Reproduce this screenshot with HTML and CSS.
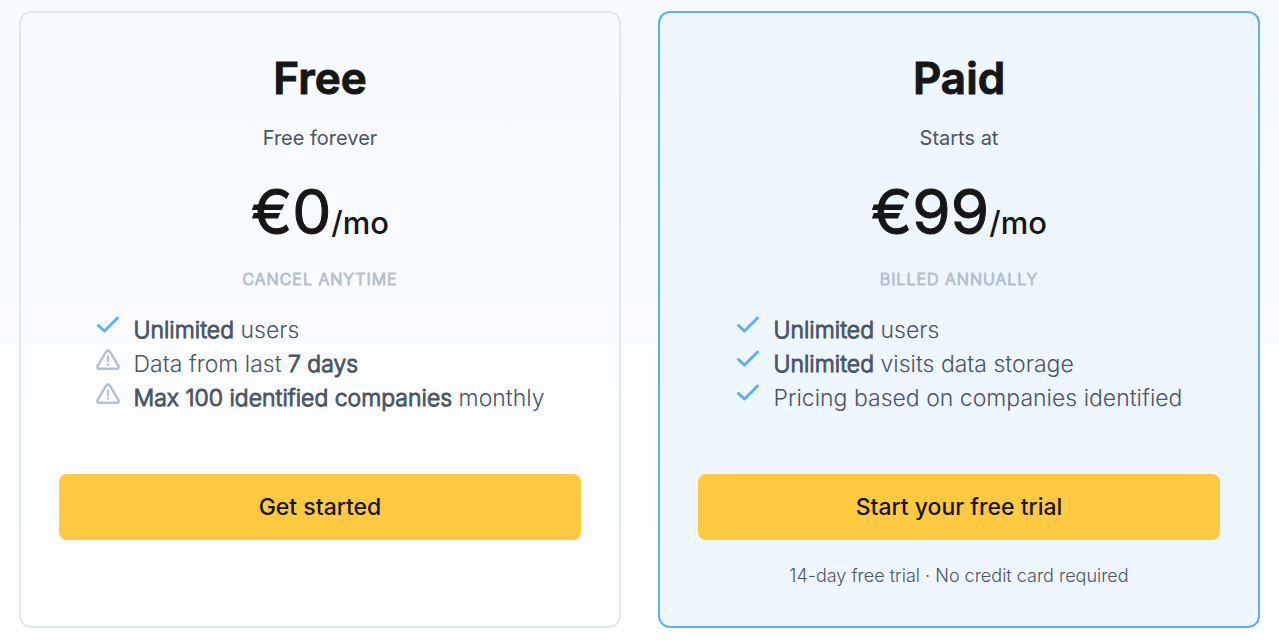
FILE: index.html
```html
<!DOCTYPE html>
<html lang="en">
<head>
  <meta charset="UTF-8">
  <title>Pricing</title>
  <meta name="viewport" content="width=device-width, initial-scale=1.0">
  <link rel="stylesheet" href="styles.css">
</head>
<body>

  <!-- Shared icons -->
  <svg class="icon-defs" aria-hidden="true">
    <symbol id="icon-check" viewBox="0 0 24 24">
      <path d="M2.5 11.5 L8.5 17 L21.5 4" fill="none" stroke="currentColor" stroke-width="3" stroke-linecap="round" stroke-linejoin="round"/>
    </symbol>
    <symbol id="icon-warning" viewBox="0 0 24 24">
      <path d="M10.3 3.4 L1.6 17.8 Q0.6 20.6 3.2 20.8 L20.8 20.8 Q23.4 20.6 22.4 17.8 L13.7 3.4 Q12 1.5 10.3 3.4 Z" fill="none" stroke="currentColor" stroke-width="2.4" stroke-linejoin="round"/>
      <path d="M12 7.5 V14 M12 15.6 V17.8" fill="none" stroke="currentColor" stroke-width="2.2"/>
    </symbol>
  </svg>

  <main class="plans">

    <!-- Free plan -->
    <section class="plan">
      <h2 class="plan-name">Free</h2>
      <p class="plan-intro">Free forever</p>
      <p class="plan-price">€0<span class="plan-period">/mo</span></p>
      <p class="plan-billing">Cancel anytime</p>
      <ul class="features">
        <li><svg class="icon icon-check"><use href="#icon-check"/></svg><span><strong>Unlimited</strong> users</span></li>
        <li><svg class="icon icon-warning"><use href="#icon-warning"/></svg><span>Data from last <strong>7 days</strong></span></li>
        <li><svg class="icon icon-warning"><use href="#icon-warning"/></svg><span><strong>Max 100 identified companies</strong> monthly</span></li>
      </ul>
      <button type="button" class="plan-button">Get started</button>
    </section>

    <!-- Paid plan -->
    <section class="plan plan-paid">
      <h2 class="plan-name">Paid</h2>
      <p class="plan-intro">Starts at</p>
      <p class="plan-price">€99<span class="plan-period">/mo</span></p>
      <p class="plan-billing">Billed annually</p>
      <ul class="features">
        <li><svg class="icon icon-check"><use href="#icon-check"/></svg><span><strong>Unlimited</strong> users</span></li>
        <li><svg class="icon icon-check"><use href="#icon-check"/></svg><span><strong>Unlimited</strong> visits data storage</span></li>
        <li><svg class="icon icon-check"><use href="#icon-check"/></svg><span>Pricing based on companies identified</span></li>
      </ul>
      <button type="button" class="plan-button">Start your free trial</button>
      <p class="plan-note">14-day free trial · No credit card required</p>
    </section>

  </main>

</body>
</html>
```

FILE: styles.css
```css
* {
  box-sizing: border-box;
}

body {
  margin: 0;
  min-height: 100vh;
  font-family: Inter, "Liberation Sans", sans-serif;
  font-weight: 300;
  color: #4b5563;
  background: linear-gradient(#f5faff, #ffffff 600px);
}

.icon-defs {
  display: none;
}

.plans {
  display: grid;
  grid-template-columns: 1fr 1fr;
  gap: 37px;
  padding: 11px 19px 12px;
}

.plan {
  display: flex;
  flex-direction: column;
  align-items: center;
  padding: 36px 38px 37px;
  border: 2px solid #e1e6f5;
  border-radius: 12px;
  text-align: center;
}

.plan-paid {
  background: #eef6ff;
  border-color: #5aafff;
}

.plan-name {
  margin: 0;
  font-size: 44px;
  line-height: 58px;
  font-weight: 600;
  color: #161616;
  -webkit-text-stroke: 1px;
}

.plan-intro {
  margin: 16px 0 0;
  font-size: 20px;
  line-height: 30px;
  font-weight: 400;
}

.plan-price {
  margin: 20px 0 0;
  font-size: 62px;
  line-height: 78px;
  font-weight: 400;
  color: #161616;
  -webkit-text-stroke: 1px;
}

.plan-period {
  font-size: 31px;
  line-height: 1;
  font-weight: 500;
  -webkit-text-stroke: 0;
}

.plan-billing {
  margin: 16px 0 0;
  font-size: 16px;
  line-height: 24px;
  font-weight: 300;
  letter-spacing: 1px;
  text-transform: uppercase;
  color: #b3bfd3;
  -webkit-text-stroke: 1px;
}

.features {
  margin: 22px 0 0;
  padding: 0;
  list-style: none;
  font-size: 23px;
  line-height: 34px;
  text-align: left;
}

.features li {
  display: flex;
  gap: 14px;
}

/* thickened light weight, so bold words keep the line's rhythm */
.features strong {
  font-weight: 300;
  -webkit-text-stroke: 1px;
}

.icon {
  flex: none;
  width: 24px;
  height: 24px;
  margin-top: 1px;
}

.icon-check {
  color: #5aafff;
}

.icon-warning {
  color: #b3bfd3;
}

.plan-button {
  width: 100%;
  margin-top: 59px;
  padding: 16px;
  border: none;
  border-radius: 8px;
  background: #ffc940;
  color: #161616;
  font-family: inherit;
  font-size: 23px;
  line-height: 34px;
  font-weight: 500;
  cursor: pointer;
}

.plan-note {
  margin: 22px 0 0;
  font-size: 18px;
  line-height: 27px;
}

@media (max-width: 900px) {
  .plans {
    grid-template-columns: 1fr;
  }
}
```
